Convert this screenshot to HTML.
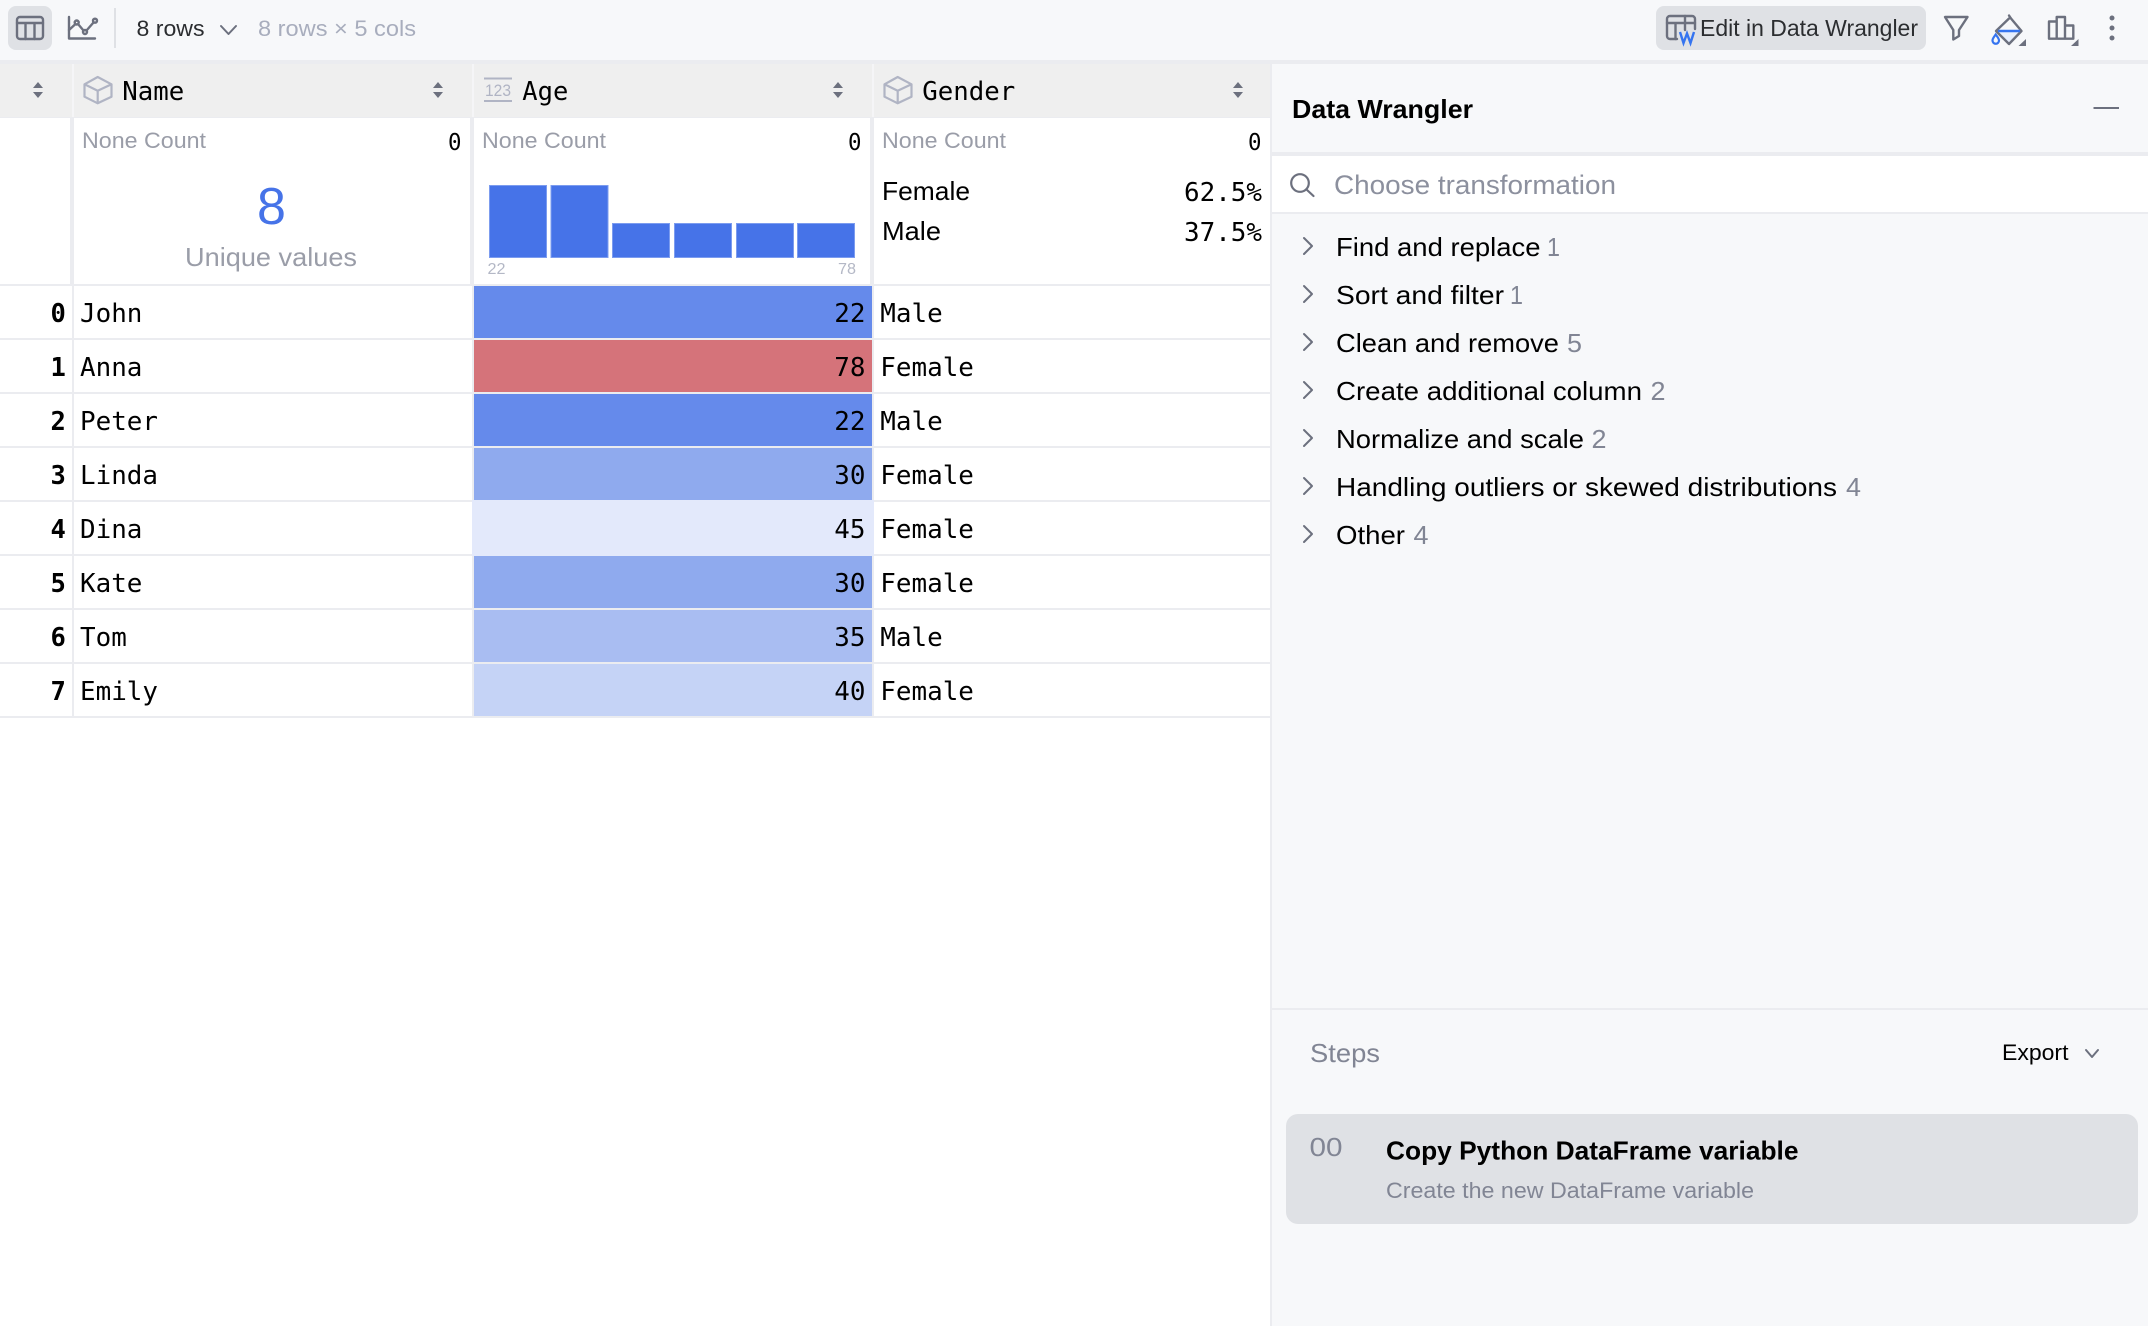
<!DOCTYPE html>
<html><head><meta charset="utf-8"><title>Data Wrangler</title>
<style>
html,body{margin:0;padding:0;background:#fff;width:2148px;height:1326px;overflow:hidden}
svg{display:block}
text{font-family:"Liberation Sans",sans-serif;white-space:pre}
.m{font-family:"DejaVu Sans Mono","Liberation Mono",monospace;font-size:25.5px;fill:#000}
.b{font-weight:bold}
.g{fill:#9a9da8}
.s{font-size:26px;fill:#000}
.n{font-size:26px;fill:#818594}
.ic{fill:none;stroke:#6c707e;stroke-width:2.4;stroke-linejoin:round;stroke-linecap:round}
.cb{fill:none;stroke:#b0b4c4;stroke-width:2.2;stroke-linejoin:round}
.ch{fill:none;stroke:#6c707e;stroke-width:2;stroke-linecap:round;stroke-linejoin:round}
</style></head>
<body>
<svg width="2148" height="1326" viewBox="0 0 2148 1326" xmlns="http://www.w3.org/2000/svg">
<!-- backgrounds -->
<rect width="2148" height="1326" fill="#fff"/>
<rect width="2148" height="60" fill="#f7f8fa"/>
<rect y="60" width="2148" height="4" fill="#ebecf0"/>
<!-- toolbar -->
<rect x="8" y="6" width="44" height="44" rx="8" fill="#dfe1e5"/>
<g class="ic">
<rect x="17" y="17" width="26" height="22" rx="3"/>
<path d="M17 23H43M25.5 23V39M34.5 23V39"/>
<path d="M69 17V38.5H95"/>
<path d="M69 30L75.5 24M78 24L83.5 30.5M86.5 30.5L93.5 22.5"/>
<circle cx="76.7" cy="22.5" r="2"/><circle cx="85" cy="32" r="2"/><circle cx="95" cy="20.7" r="2"/>
</g>
<rect x="114" y="8" width="2" height="40" fill="#dfe1e5"/>
<text x="136.500" y="36" font-size="22" fill="#2b2d30" textLength="68" lengthAdjust="spacingAndGlyphs">8 rows</text>
<path class="ch" d="M221 26L228.5 34L236 26"/>
<text x="258" y="36" font-size="22" fill="#a8adbd" textLength="158" lengthAdjust="spacingAndGlyphs">8 rows × 5 cols</text>
<rect x="1656" y="6" width="270" height="44" rx="8" fill="#dfe1e5"/>
<g class="ic">
<path d="M1677 39H1670a3 3 0 0 1-3-3V19a3 3 0 0 1 3-3H1692a3 3 0 0 1 3 3V29"/>
<path d="M1667 23H1695M1675.5 23V39M1685 16V30"/>
</g>
<path d="M1680 32L1683.5 43L1687 33.500L1690.500 43L1694 32" fill="none" stroke="#3574f0" stroke-width="2.400"/>
<text x="1700" y="36" font-size="23" fill="#2b2d30" textLength="218" lengthAdjust="spacingAndGlyphs">Edit in Data Wrangler</text>
<path class="ic" d="M1945 17H1967.500L1959 30V36L1953.300 39.500V30Z"/>
<path d="M1996.500 31H2021L2009 44Z" fill="#e7effd"/>
<path class="ic" d="M2009 15.500L2011 18.500L2021.500 31L2009 44L1996 31L2009 18.500"/>
<path d="M1998 31H2020" stroke="#3574f0" stroke-width="2.400"/>
<path d="M1995.700 34.500C1994 37 1992.500 38.500 1992.500 40.500A3.200 3.200 0 0 0 1999 40.500C1999 38.500 1997.500 37 1995.700 34.500Z" fill="none" stroke="#3574f0" stroke-width="2.200"/>
<path d="M2026 39V46H2018.500Z" fill="#6c707e"/>
<path class="ic" d="M2049 21.500H2056.700V38.700H2049ZM2056.700 17H2065V38.700H2056.700ZM2065 25.500H2073.300V38.700H2065Z"/>
<path d="M2078.500 39V46H2071Z" fill="#6c707e"/>
<circle cx="2112" cy="18" r="2.500" fill="#6c707e"/><circle cx="2112" cy="28" r="2.500" fill="#6c707e"/><circle cx="2112" cy="38" r="2.500" fill="#6c707e"/>

<!-- header -->
<rect y="64" width="1270" height="53" fill="#efefef"/>
<rect x="72" y="64" width="2" height="53" fill="#f5f5f7"/>
<rect x="472" y="64" width="2" height="53" fill="#f5f5f7"/>
<rect x="872" y="64" width="2" height="53" fill="#f5f5f7"/>
<rect y="117" width="1270" height="1" fill="#ebecf0"/>
<g fill="#6c707e">
<path d="M33 88L38 82L43 88ZM33 92L38 98L43 92Z"/>
<path d="M433 88L438 82L443 88ZM433 92L438 98L443 92Z"/>
<path d="M833 88L838 82L843 88ZM833 92L838 98L843 92Z"/>
<path d="M1233 88L1238 82L1243 88ZM1233 92L1238 98L1243 92Z"/>
</g>
<path class="cb" d="M97.700 77L111.500 84.300V96.700L97.700 103.300L84.500 96.700V84.300ZM84.500 84.300L97.700 90.700L111.500 84.300M97.700 90.700V103.300"/>
<path class="cb" d="M897.700 77L911.500 84.300V96.700L897.700 103.300L884.500 96.700V84.300ZM884.500 84.300L897.700 90.700L911.500 84.300M897.700 90.700V103.300"/>
<rect x="484" y="77.500" width="28" height="2" fill="#b0b4c4"/><rect x="484" y="100" width="28" height="2" fill="#b0b4c4"/>
<text x="485" y="96" font-size="16.500" fill="#b0b4c4" textLength="26" lengthAdjust="spacingAndGlyphs">123</text>
<text class="m" x="122.300" y="100" textLength="62" lengthAdjust="spacingAndGlyphs">Name</text>
<text class="m" x="522.300" y="100" textLength="46" lengthAdjust="spacingAndGlyphs">Age</text>
<text class="m" x="922.300" y="100" textLength="93" lengthAdjust="spacingAndGlyphs">Gender</text>

<!-- stats row -->
<rect x="70" y="118" width="4" height="166" fill="#ebecf0"/>
<rect x="470" y="118" width="4" height="166" fill="#ebecf0"/>
<rect x="870" y="118" width="4" height="166" fill="#ebecf0"/>
<rect y="284" width="1270" height="2" fill="#ebecf0"/>
<g font-size="22" class="g">
<text x="82" y="148" textLength="124" lengthAdjust="spacingAndGlyphs">None Count</text>
<text x="482" y="148" textLength="124" lengthAdjust="spacingAndGlyphs">None Count</text>
<text x="882" y="148" textLength="124" lengthAdjust="spacingAndGlyphs">None Count</text>
</g>
<text class="m" style="font-size:23px" x="448" y="150" textLength="13.500" lengthAdjust="spacingAndGlyphs">0</text>
<text class="m" style="font-size:23px" x="848" y="150" textLength="13.500" lengthAdjust="spacingAndGlyphs">0</text>
<text class="m" style="font-size:23px" x="1248" y="150" textLength="13.500" lengthAdjust="spacingAndGlyphs">0</text>
<text x="271.500" y="224" text-anchor="middle" font-size="52" fill="#4673e8">8</text>
<text x="185" y="266" font-size="26" class="g" textLength="172" lengthAdjust="spacingAndGlyphs">Unique values</text>
<g fill="#4673e8" stroke="#7c9cef" stroke-width="1">
<rect x="489.500" y="185.500" width="57" height="72"/>
<rect x="551" y="185.500" width="57" height="72"/>
<rect x="612.500" y="223.500" width="57" height="34"/>
<rect x="674.500" y="223.500" width="57" height="34"/>
<rect x="736.500" y="223.500" width="57" height="34"/>
<rect x="797.500" y="223.500" width="57" height="34"/>
</g>
<text x="487.500" y="274" font-size="16" fill="#b4b8c6" textLength="18" lengthAdjust="spacingAndGlyphs">22</text>
<text x="838" y="274" font-size="16" fill="#b4b8c6" textLength="18" lengthAdjust="spacingAndGlyphs">78</text>
<text class="s" x="882" y="200" textLength="88" lengthAdjust="spacingAndGlyphs">Female</text>
<text class="s" x="882" y="240" textLength="59" lengthAdjust="spacingAndGlyphs">Male</text>
<text class="m" x="1184" y="201" textLength="78" lengthAdjust="spacingAndGlyphs">62.5%</text>
<text class="m" x="1184" y="241" textLength="78" lengthAdjust="spacingAndGlyphs">37.5%</text>

<!-- data rows -->
<g fill="#ebecf0">
<rect y="338" width="1270" height="2"/><rect y="392" width="1270" height="2"/><rect y="446" width="1270" height="2"/><rect y="500" width="1270" height="2"/><rect y="554" width="1270" height="2"/><rect y="608" width="1270" height="2"/><rect y="662" width="1270" height="2"/><rect y="716" width="1270" height="2"/>
<rect x="72" y="286" width="2" height="430"/><rect x="472" y="286" width="2" height="430"/><rect x="872" y="286" width="2" height="430"/>
</g>
<rect x="474" y="286" width="398" height="52" fill="#658aeb"/>
<rect x="474" y="340" width="398" height="52" fill="#d5737a"/>
<rect x="474" y="394" width="398" height="52" fill="#658aeb"/>
<rect x="474" y="448" width="398" height="52" fill="#8faaee"/>
<rect x="472" y="500" width="402" height="56" fill="#e3e9fb"/>
<rect x="474" y="556" width="398" height="52" fill="#8faaee"/>
<rect x="474" y="610" width="398" height="52" fill="#a9bdf2"/>
<rect x="474" y="664" width="398" height="52" fill="#c5d3f6"/>
<g class="m">
<text class="m b" x="50.500" y="322">0</text><text class="m" x="80" y="322" textLength="62.400" lengthAdjust="spacingAndGlyphs">John</text><text class="m" x="834.300" y="322" textLength="31.200" lengthAdjust="spacingAndGlyphs">22</text><text class="m" x="880.300" y="322" textLength="62.400" lengthAdjust="spacingAndGlyphs">Male</text>
<text class="m b" x="50.500" y="376">1</text><text class="m" x="80" y="376" textLength="62.400" lengthAdjust="spacingAndGlyphs">Anna</text><text class="m" x="834.300" y="376" textLength="31.200" lengthAdjust="spacingAndGlyphs">78</text><text class="m" x="880.300" y="376" textLength="93.600" lengthAdjust="spacingAndGlyphs">Female</text>
<text class="m b" x="50.500" y="430">2</text><text class="m" x="80" y="430" textLength="78" lengthAdjust="spacingAndGlyphs">Peter</text><text class="m" x="834.300" y="430" textLength="31.200" lengthAdjust="spacingAndGlyphs">22</text><text class="m" x="880.300" y="430" textLength="62.400" lengthAdjust="spacingAndGlyphs">Male</text>
<text class="m b" x="50.500" y="484">3</text><text class="m" x="80" y="484" textLength="78" lengthAdjust="spacingAndGlyphs">Linda</text><text class="m" x="834.300" y="484" textLength="31.200" lengthAdjust="spacingAndGlyphs">30</text><text class="m" x="880.300" y="484" textLength="93.600" lengthAdjust="spacingAndGlyphs">Female</text>
<text class="m b" x="50.500" y="538">4</text><text class="m" x="80" y="538" textLength="62.400" lengthAdjust="spacingAndGlyphs">Dina</text><text class="m" x="834.300" y="538" textLength="31.200" lengthAdjust="spacingAndGlyphs">45</text><text class="m" x="880.300" y="538" textLength="93.600" lengthAdjust="spacingAndGlyphs">Female</text>
<text class="m b" x="50.500" y="592">5</text><text class="m" x="80" y="592" textLength="62.400" lengthAdjust="spacingAndGlyphs">Kate</text><text class="m" x="834.300" y="592" textLength="31.200" lengthAdjust="spacingAndGlyphs">30</text><text class="m" x="880.300" y="592" textLength="93.600" lengthAdjust="spacingAndGlyphs">Female</text>
<text class="m b" x="50.500" y="646">6</text><text class="m" x="80" y="646" textLength="46.800" lengthAdjust="spacingAndGlyphs">Tom</text><text class="m" x="834.300" y="646" textLength="31.200" lengthAdjust="spacingAndGlyphs">35</text><text class="m" x="880.300" y="646" textLength="62.400" lengthAdjust="spacingAndGlyphs">Male</text>
<text class="m b" x="50.500" y="700">7</text><text class="m" x="80" y="700" textLength="78" lengthAdjust="spacingAndGlyphs">Emily</text><text class="m" x="834.300" y="700" textLength="31.200" lengthAdjust="spacingAndGlyphs">40</text><text class="m" x="880.300" y="700" textLength="93.600" lengthAdjust="spacingAndGlyphs">Female</text>
</g>

<!-- right panel -->
<rect x="1270" y="64" width="878" height="1262" fill="#f7f8fa"/>
<rect x="1270" y="64" width="2" height="1262" fill="#ebecf0"/>
<text x="1292" y="118" font-size="26" font-weight="bold" fill="#000" textLength="181" lengthAdjust="spacingAndGlyphs">Data Wrangler</text>
<rect x="2093.500" y="107" width="25.500" height="2" fill="#6c707e"/>
<rect x="1272" y="152" width="876" height="4" fill="#ebecf0"/>
<rect x="1272" y="156" width="876" height="56" fill="#fff"/>
<rect x="1272" y="212" width="876" height="2" fill="#ebecf0"/>
<circle cx="1300" cy="183" r="8.800" fill="none" stroke="#6c707e" stroke-width="2.200"/>
<path d="M1306.500 189.500L1313.500 196" stroke="#6c707e" stroke-width="2.200" stroke-linecap="round"/>
<text x="1334" y="194" font-size="27" fill="#8c909e" textLength="282" lengthAdjust="spacingAndGlyphs">Choose transformation</text>

<g class="ch">
<path d="M1304 238L1312 246L1304 254"/>
<path d="M1304 286L1312 294L1304 302"/>
<path d="M1304 334L1312 342L1304 350"/>
<path d="M1304 382L1312 390L1304 398"/>
<path d="M1304 430L1312 438L1304 446"/>
<path d="M1304 478L1312 486L1304 494"/>
<path d="M1304 526L1312 534L1304 542"/>
</g>
<text class="s" x="1336" y="256" textLength="204.500" lengthAdjust="spacingAndGlyphs">Find and replace</text><text class="n" x="1547" y="256" textLength="13" lengthAdjust="spacingAndGlyphs">1</text>
<text class="s" x="1336" y="304" textLength="168" lengthAdjust="spacingAndGlyphs">Sort and filter</text><text class="n" x="1510" y="304" textLength="13" lengthAdjust="spacingAndGlyphs">1</text>
<text class="s" x="1336" y="352" textLength="223" lengthAdjust="spacingAndGlyphs">Clean and remove</text><text class="n" x="1567" y="352" textLength="15" lengthAdjust="spacingAndGlyphs">5</text>
<text class="s" x="1336" y="400" textLength="306" lengthAdjust="spacingAndGlyphs">Create additional column</text><text class="n" x="1650.500" y="400" textLength="15" lengthAdjust="spacingAndGlyphs">2</text>
<text class="s" x="1336" y="448" textLength="248" lengthAdjust="spacingAndGlyphs">Normalize and scale</text><text class="n" x="1591.500" y="448" textLength="15" lengthAdjust="spacingAndGlyphs">2</text>
<text class="s" x="1336" y="496" textLength="501" lengthAdjust="spacingAndGlyphs">Handling outliers or skewed distributions</text><text class="n" x="1846" y="496" textLength="15" lengthAdjust="spacingAndGlyphs">4</text>
<text class="s" x="1336" y="544" textLength="69" lengthAdjust="spacingAndGlyphs">Other</text><text class="n" x="1413.500" y="544" textLength="15" lengthAdjust="spacingAndGlyphs">4</text>

<rect x="1272" y="1008" width="876" height="2" fill="#ebecf0"/>
<text class="n" x="1310" y="1062" textLength="70" lengthAdjust="spacingAndGlyphs">Steps</text>
<text x="2002" y="1060" font-size="22" fill="#000" textLength="66.500" lengthAdjust="spacingAndGlyphs">Export</text>
<path class="ch" d="M2086 1050L2092 1057L2098 1050"/>
<rect x="1286" y="1114" width="852" height="110" rx="12" fill="#dfe1e5"/>
<text class="n" x="1309.500" y="1156" textLength="33" lengthAdjust="spacingAndGlyphs">00</text>
<text x="1386" y="1159.500" font-size="26" font-weight="bold" fill="#000" textLength="412.500" lengthAdjust="spacingAndGlyphs">Copy Python DataFrame variable</text>
<text x="1386" y="1198" font-size="22" fill="#818594" textLength="368" lengthAdjust="spacingAndGlyphs">Create the new DataFrame variable</text>
</svg>
</body></html>
